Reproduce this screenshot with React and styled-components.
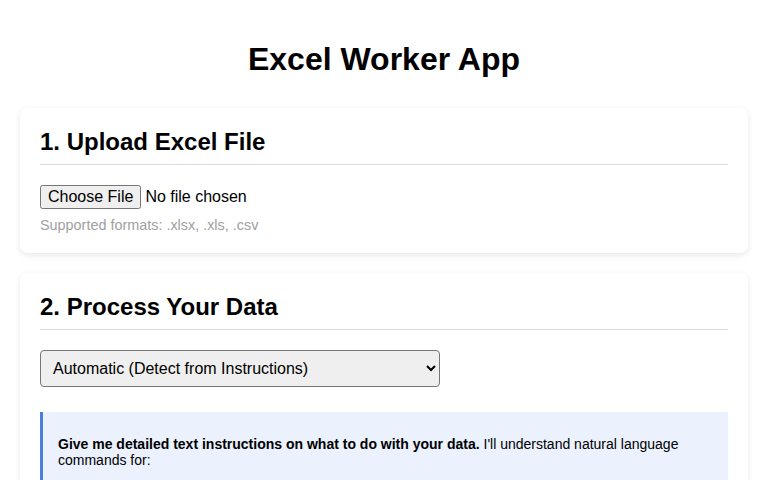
import React from 'react';
import styled, { createGlobalStyle } from 'styled-components';

const GlobalStyle = createGlobalStyle`
    body {
        margin: 0;
        background: #ffffff;
        font-family: "Liberation Sans", Arial, sans-serif;
        color: #000;
    }
`;

const Page = styled.main`
    padding: 20px;
`;

const Title = styled.h1`
    margin: 21px 0 30px;
    text-align: center;
    font-size: 32px;
    line-height: 37px;
    font-weight: bold;
`;

const Card = styled.section`
    background: #fff;
    border-radius: 8px;
    box-shadow: 0 2px 6px rgba(0, 0, 0, 0.1);
    padding: 20px;
    margin-bottom: 20px;
`;

const CardTitle = styled.h2`
    margin: 0 0 20px;
    font-size: 24px;
    line-height: 28px;
    padding-bottom: 8px;
    border-bottom: 1px solid #ddd;
`;

const FileInput = styled.input`
    display: block;
    font: inherit;
    font-size: 16px;
`;

const Hint = styled.p`
    margin: 8px 0 0;
    font-size: 14.4px;
    line-height: 16px;
    color: #a0a0a0;
`;

const Select = styled.select`
    display: block;
    width: 400px;
    height: 37px;
    padding: 0 8px;
    font: inherit;
    font-size: 16px;
    border: 1px solid #767676;
    border-radius: 4px;
    background: #efefef;
    color: #000;
    margin-bottom: 25px;
`;

const InfoBox = styled.div`
    background: #ebf2fd;
    border-left: 3px solid #4a80dc;
    padding: 14px 15px;
    font-size: 14px;
    line-height: 16px;

    p {
        margin: 10px 0;
    }

    ul {
        margin: 12px 0;
    }
`;

export default function App() {
    return (
        <>
            <GlobalStyle />
            <Page>
                <Title>Excel Worker App</Title>
                <Card>
                    <CardTitle>1. Upload Excel File</CardTitle>
                    <FileInput type="file" accept=".xlsx,.xls,.csv" />
                    <Hint>Supported formats: .xlsx, .xls, .csv</Hint>
                </Card>
                <Card>
                    <CardTitle>2. Process Your Data</CardTitle>
                    <Select defaultValue="auto">
                        <option value="auto">Automatic (Detect from Instructions)</option>
                        <option value="clean">Clean Data</option>
                        <option value="summary">Summarize</option>
                    </Select>
                    <InfoBox>
                        <p>
                            <strong>Give me detailed text instructions on what to do with your data.</strong>{' '}
                            I'll understand natural language commands for:
                        </p>
                        <ul>
                            <li>Filtering and sorting rows</li>
                            <li>Calculating totals and averages</li>
                        </ul>
                    </InfoBox>
                </Card>
            </Page>
        </>
    );
}
